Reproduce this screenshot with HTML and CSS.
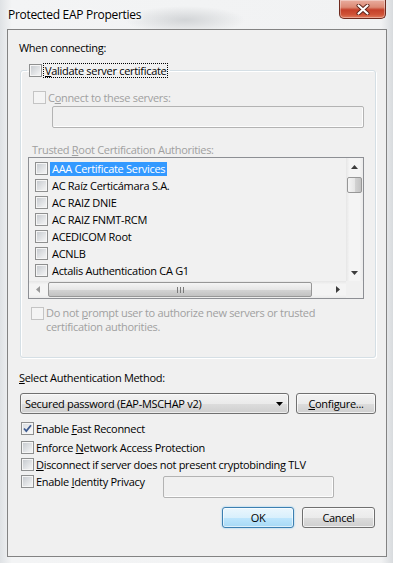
FILE: index.html
```html
<!DOCTYPE html>
<html lang="en">
<head>
    <meta charset="UTF-8">
    <title>Protected EAP Properties</title>
    <link rel="stylesheet" href="styles.css">
</head>
<body>
    <div class="window">
        <div class="titlebar">
            <span class="title">Protected EAP Properties</span>
            <span class="close">
                <svg width="14" height="11" viewBox="0 0 14 11">
                    <path d="M2.5 1.5 L11.5 9.5 M11.5 1.5 L2.5 9.5" stroke="#5b2218" stroke-width="4" stroke-linecap="round"/>
                    <path d="M2.5 1.5 L11.5 9.5 M11.5 1.5 L2.5 9.5" stroke="#ffffff" stroke-width="2.2" stroke-linecap="round"/>
                </svg>
            </span>
        </div>

        <div class="client">
            <div class="line"><span>When connecting:</span></div>

            <fieldset class="group">
                <legend class="legend">
                    <span class="box"></span>
                    <span class="focus"><u>V</u>alidate server certificate</span>
                </legend>

                <div class="line servers dim"><span class="box off"></span><span>C<u>o</u>nnect to these servers:</span></div>
                <div class="textbox servers-box"></div>

                <div class="line trusted dim"><span>Trusted <u>R</u>oot Certification Authorities:</span></div>

                <div class="listbox">
                    <div class="items">
                        <div class="item"><span class="box"></span><span class="name selected">AAA Certificate Services</span></div>
                        <div class="item"><span class="box"></span><span class="name">AC Raíz Certicámara S.A.</span></div>
                        <div class="item"><span class="box"></span><span class="name">AC RAIZ DNIE</span></div>
                        <div class="item"><span class="box"></span><span class="name">AC RAIZ FNMT-RCM</span></div>
                        <div class="item"><span class="box"></span><span class="name">ACEDICOM Root</span></div>
                        <div class="item"><span class="box"></span><span class="name">ACNLB</span></div>
                        <div class="item"><span class="box"></span><span class="name">Actalis Authentication CA G1</span></div>
                    </div>
                    <div class="vscroll">
                        <span class="arrow"><svg width="7" height="4" viewBox="0 0 7 4"><polygon points="0,4 7,4 3.5,0" fill="#3c3c3c"/></svg></span>
                        <span class="vthumb"></span>
                        <span class="arrow down"><svg width="7" height="4" viewBox="0 0 7 4"><polygon points="0,0 7,0 3.5,4" fill="#3c3c3c"/></svg></span>
                    </div>
                    <div class="hscroll">
                        <span class="arrow"><svg width="4" height="7" viewBox="0 0 4 7"><polygon points="4,0 4,7 0,3.5" fill="#9a9a9a"/></svg></span>
                        <span class="hthumb"><svg width="7" height="6" viewBox="0 0 7 6"><path d="M0.5 0 V6 M3.5 0 V6 M6.5 0 V6" stroke="#7a7a7a" stroke-width="1"/></svg></span>
                        <span class="arrow right"><svg width="4" height="7" viewBox="0 0 4 7"><polygon points="0,0 0,7 4,3.5" fill="#3c3c3c"/></svg></span>
                    </div>
                    <div class="corner"></div>
                </div>

                <div class="prompt dim">
                    <span class="box off"></span>
                    <div class="prompt-text">
                        <div>Do not <u>p</u>rompt user to authorize new servers or trusted</div>
                        <div>certification authorities.</div>
                    </div>
                </div>
            </fieldset>

            <div class="line method"><span><u>S</u>elect Authentication Method:</span></div>

            <div class="method-row">
                <div class="combo">
                    <span>Secured password (EAP-MSCHAP v2)</span>
                    <svg width="7" height="4" viewBox="0 0 7 4"><polygon points="0,0 7,0 3.5,4" fill="#000"/></svg>
                </div>
                <div class="button configure"><span><u>C</u>onfigure...</span></div>
            </div>

            <div class="option first">
                <span class="box checked">
                    <svg width="11" height="11" viewBox="0 0 11 11"><path d="M2 5.5 L4.3 8 L9 2.2" fill="none" stroke="#3d5a8f" stroke-width="1.8"/></svg>
                </span>
                <span>Enable <u>F</u>ast Reconnect</span>
            </div>
            <div class="option"><span class="box"></span><span>Enforce <u>N</u>etwork Access Protection</span></div>
            <div class="option"><span class="box"></span><span><u>D</u>isconnect if server does not present cryptobinding TLV</span></div>
            <div class="option identity">
                <span class="box"></span>
                <span class="identity-label">Enable <u>I</u>dentity Privacy</span>
                <div class="textbox identity-box"></div>
            </div>

            <div class="buttons">
                <div class="button default">OK</div>
                <div class="button">Cancel</div>
            </div>
        </div>
    </div>
</body>
</html>
```

FILE: styles.css
```css
* {
    box-sizing: border-box;
}
body {
    margin: 0;
    width: 393px;
    height: 563px;
    overflow: hidden;
    font-family: "Open Sans", "Noto Sans", sans-serif;
    font-size: 11px;
    letter-spacing: -0.3px;
    color: #000;
    background:
        radial-gradient(ellipse 60px 14px at 185px 20px, rgba(150, 155, 160, 0.35), transparent),
        linear-gradient(to right, #dfe2e5, #f3f4f5 3%, #f1f2f3 97%, #d8dbde);
}
u {
    text-decoration: underline;
    text-underline-offset: 1px;
}
.window {
    height: 563px;
    display: flex;
    flex-direction: column;
}

/* title bar */
.titlebar {
    height: 29px;
    display: flex;
    justify-content: space-between;
    align-items: flex-start;
    padding: 0 7px 0 8px;
}
.title {
    font-size: 12px;
    line-height: 15px;
    margin-top: 7px;
    text-shadow: 0 0 6px #fff, 0 0 3px #fff;
}
.close {
    width: 47px;
    height: 19px;
    border: 1px solid #6e2a1e;
    border-top: none;
    border-radius: 0 0 5px 5px;
    background: linear-gradient(#e9ad9f, #dc8a75 40%, #c5402a 55%, #cf5236 80%, #e07a5c);
    box-shadow: inset 0 0 0 1px rgba(255, 255, 255, 0.35);
    display: flex;
    align-items: center;
    justify-content: center;
}

/* client area */
.client {
    height: 528px;
    margin: 0 6px 0 7px;
    border: 1px solid #838383;
    background: #f0f0f0;
    padding: 10px 10px 0 11px;
}
.line {
    line-height: 15px;
    display: flex;
    align-items: center;
}
.dim {
    color: #a0a0a0;
}

/* checkboxes */
.box {
    width: 13px;
    height: 13px;
    flex: none;
    border: 1px solid #8e8f8f;
    background: linear-gradient(135deg, #c3c7cc, #eeeff0 80%);
    box-shadow: inset 0 0 0 1px #f5f5f5;
    display: flex;
    align-items: center;
    justify-content: center;
}
.box.off {
    border-color: #c4c4c4;
    background: #f4f4f4;
    box-shadow: none;
}
.box.checked {
    background: linear-gradient(135deg, #d7dbe0, #f6f6f6 80%);
}

/* group box */
.group {
    margin: 8px 0 0 1px;
    padding: 0;
    height: 295px;
    border: 1px solid #d5dfe5;
    border-radius: 3px;
    box-shadow: inset 1px 1px 0 #fff, 1px 1px 0 #fff;
}
.legend {
    display: flex;
    align-items: center;
    height: 15px;
    padding: 0 2px;
    margin-left: 6px;
}
.focus {
    margin-left: 1px;
    padding: 0 1px;
    line-height: 13px;
    border: 1px dotted #000;
}
.servers {
    margin: 12px 0 0 12px;
    gap: 2px;
}
.textbox {
    height: 22px;
    border: 1px solid #b3b3b3;
    border-radius: 2px;
    background: #f0f0f0;
    box-shadow: inset -1px -1px 0 #fdfdfd;
}
.servers-box {
    margin: 1px 0 0 31px;
    width: 312px;
}
.trusted {
    margin: 14px 0 0 11px;
}

/* certificate list */
.listbox {
    margin-left: 7px;
    width: 336px;
    height: 142px;
    border: 1px solid #8d8f94;
    background: #f1f1f1;
    display: grid;
    grid-template-columns: 1fr 17px;
    grid-template-rows: 1fr 17px;
    overflow: hidden;
}
.items {
    padding-top: 2px;
    overflow: hidden;
}
.item {
    height: 17px;
    display: flex;
    align-items: center;
    padding-left: 6px;
}
.name {
    margin-left: 2px;
    padding: 0 2px;
    line-height: 14px;
    white-space: nowrap;
}
.name.selected {
    background: #3399ff;
    color: #fff;
}
.vscroll {
    display: flex;
    flex-direction: column;
    align-items: center;
    background: linear-gradient(to right, #e6e6e6, #f4f4f4 20%, #f4f4f4 80%, #ebebeb);
}
.arrow {
    width: 17px;
    height: 17px;
    flex: none;
    display: flex;
    align-items: center;
    justify-content: center;
}
.arrow.down {
    margin-top: auto;
}
.vthumb {
    width: 15px;
    height: 16px;
    margin-top: 2px;
    border: 1px solid #979797;
    border-radius: 2px;
    background: linear-gradient(to right, #f5f5f5, #e6e6e6 50%, #d4d4d4 51%, #c2c2c2);
}
.hscroll {
    display: flex;
    align-items: center;
    background: linear-gradient(#e6e6e6, #f4f4f4 20%, #f4f4f4 80%, #ebebeb);
}
.hthumb {
    width: 264px;
    height: 15px;
    margin-left: 2px;
    border: 1px solid #979797;
    border-radius: 2px;
    background: linear-gradient(#f5f5f5, #e6e6e6 50%, #d4d4d4 51%, #c2c2c2);
    display: flex;
    align-items: center;
    justify-content: center;
}
.arrow.right {
    margin-left: auto;
}
.corner {
    background: #f0f0f0;
}
.prompt {
    margin: 7px 0 0 10px;
    display: flex;
    align-items: flex-start;
    gap: 2px;
}
.prompt .box {
    margin-top: 1px;
}
.prompt-text {
    line-height: 14px;
    white-space: nowrap;
}

/* authentication method */
.method {
    margin-top: 12px;
}
.method-row {
    margin: 8px 0 0 1px;
    display: flex;
    gap: 7px;
}
.combo {
    width: 269px;
    height: 21px;
    border: 1px solid #707070;
    border-radius: 3px;
    background: linear-gradient(#f2f2f2, #ebebeb 50%, #dddddd 51%, #cfcfcf);
    box-shadow: inset 0 0 0 1px rgba(255, 255, 255, 0.6);
    display: flex;
    align-items: center;
    justify-content: space-between;
    padding: 0 5px 0 4px;
}
.button {
    height: 21px;
    border: 1px solid #707070;
    border-radius: 3px;
    background: linear-gradient(#f2f2f2, #ebebeb 50%, #dddddd 51%, #cfcfcf);
    box-shadow: inset 0 0 0 1px rgba(255, 255, 255, 0.7);
    display: flex;
    align-items: center;
    justify-content: center;
    width: 73px;
}
.configure {
    width: 80px;
}

/* options */
.option {
    margin-left: 2px;
    height: 17px;
    display: flex;
    align-items: center;
    gap: 2px;
}
.option.first {
    margin-top: 6px;
    margin-bottom: 2px;
}
.option.identity {
    height: 25px;
    align-items: flex-start;
}
.identity .box {
    margin-top: 2px;
}
.identity-label {
    width: 125px;
    line-height: 17px;
}
.identity-box {
    width: 171px;
    margin-top: 3px;
}

/* dialog buttons */
.buttons {
    margin: 9px 1px 0 0;
    display: flex;
    justify-content: flex-end;
    gap: 8px;
}
.button.default {
    width: 72px;
    border-color: #3c7fb1;
    background: linear-gradient(#eaf6fd, #d9f0fc 50%, #bee6fd 51%, #a7d9f5);
    box-shadow: inset 0 0 0 1px rgba(255, 255, 255, 0.6), 0 0 2px #7ec4ee;
}
```
